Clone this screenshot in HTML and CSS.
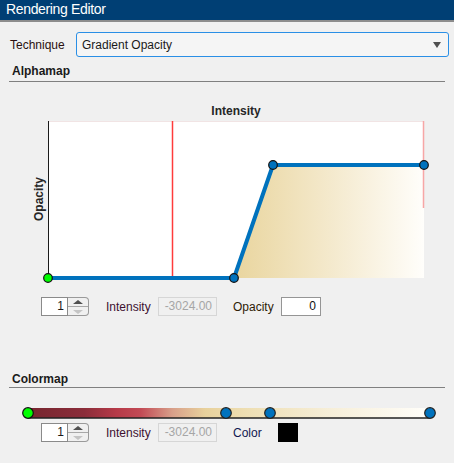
FILE: index.html
```html
<!DOCTYPE html>
<html>
<head>
<meta charset="utf-8">
<link rel="stylesheet" href="styles.css">
</head>
<body>
<div class="titlebar">Rendering Editor</div>
<div class="tech-row">
  <span class="tech-label">Technique</span>
  <div class="dropdown"><span>Gradient Opacity</span><span class="caret"></span></div>
</div>
<div class="section-head alpha-head">Alphamap</div>
<svg class="chart" width="454" height="208" viewBox="0 82 454 208">
  <defs>
    <linearGradient id="fillg" x1="0" y1="0" x2="1" y2="0">
      <stop offset="0" stop-color="#e9d59e"/>
      <stop offset="0.5" stop-color="#f4e9cc"/>
      <stop offset="1" stop-color="#fffefb"/>
    </linearGradient>
  </defs>
  <text x="236" y="115" class="ax-title" text-anchor="middle">Intensity</text>
  <text class="ax-title" text-anchor="middle" transform="translate(43 199) rotate(-90)">Opacity</text>
  <rect x="48" y="121" width="376" height="157" fill="#ffffff"/>
  <line x1="48" y1="121.5" x2="424" y2="121.5" stroke="#f1e4e4" stroke-width="1"/>
  <polygon points="234,278 273,165 424,165 424,278" fill="url(#fillg)"/>
  <line x1="172.5" y1="121" x2="172.5" y2="278" stroke="#ff3b3b" stroke-width="1.5"/>
  <line x1="423.5" y1="121" x2="423.5" y2="208" stroke="#f7a6a6" stroke-width="1.5"/>
  <line x1="48.5" y1="121" x2="48.5" y2="278" stroke="#1a1a1a" stroke-width="1"/>
  <polyline points="48,278 234,278 273,165 424,165" fill="none" stroke="#0072bd" stroke-width="4" stroke-linejoin="round"/>
  <circle cx="48" cy="278" r="4.3" fill="#00ff00" stroke="#111" stroke-width="1.2"/>
  <circle cx="234" cy="278" r="4.3" fill="#0072bd" stroke="#111" stroke-width="1.2"/>
  <circle cx="273" cy="165" r="4.3" fill="#0072bd" stroke="#111" stroke-width="1.2"/>
  <circle cx="424" cy="165" r="4.3" fill="#0072bd" stroke="#111" stroke-width="1.2"/>
</svg>
<div class="ctrl-row row1">
  <div class="spinner"><span class="spin-val">1</span><span class="spin-btns"><span class="up"></span><span class="down"></span></span></div>
  <span class="lbl lbl-int">Intensity</span>
  <span class="field disabled">-3024.00</span>
  <span class="lbl lbl-op">Opacity</span>
  <span class="field enabled">0</span>
</div>
<div class="section-head color-head">Colormap</div>
<svg class="cbar" width="454" height="22" viewBox="0 400 454 22">
  <defs>
    <linearGradient id="cmapg" x1="28" y1="0" x2="430" y2="0" gradientUnits="userSpaceOnUse">
      <stop offset="0" stop-color="#76262f"/>
      <stop offset="0.14" stop-color="#8b2d3a"/>
      <stop offset="0.22" stop-color="#b63a48"/>
      <stop offset="0.28" stop-color="#c24a55"/>
      <stop offset="0.36" stop-color="#d8a08a"/>
      <stop offset="0.44" stop-color="#e8d19c"/>
      <stop offset="0.55" stop-color="#eedfb4"/>
      <stop offset="0.75" stop-color="#f6eed8"/>
      <stop offset="1" stop-color="#fffefa"/>
    </linearGradient>
  </defs>
  <rect x="28" y="407" width="402" height="10" fill="url(#cmapg)"/>
  <line x1="28" y1="417" x2="430" y2="417" stroke="#222" stroke-width="1.5"/>
  <circle cx="28" cy="412" r="5.3" fill="#00ff00" stroke="#111" stroke-width="1.2"/>
  <circle cx="226" cy="412" r="5.3" fill="#0072bd" stroke="#222" stroke-width="1.2"/>
  <circle cx="270" cy="412" r="5.3" fill="#0072bd" stroke="#222" stroke-width="1.2"/>
  <circle cx="430" cy="412" r="5.3" fill="#0072bd" stroke="#222" stroke-width="1.2"/>
</svg>
<div class="ctrl-row row2">
  <div class="spinner"><span class="spin-val">1</span><span class="spin-btns"><span class="up"></span><span class="down"></span></span></div>
  <span class="lbl lbl-int">Intensity</span>
  <span class="field disabled">-3024.00</span>
  <span class="lbl lbl-col">Color</span>
  <span class="swatch"></span>
</div>
</body>
</html>
```

FILE: styles.css
```css
html, body {
  margin: 0;
  padding: 0;
}
body {
  width: 454px;
  height: 463px;
  background: #f0f0f0;
  font-family: "Liberation Sans", Arial, sans-serif;
  font-size: 12px;
  color: #1a1a1a;
  overflow: hidden;
}
.titlebar {
  height: 20px;
  line-height: 19px;
  background: #003f74;
  color: #ffffff;
  font-size: 14px;
  letter-spacing: -0.35px;
  padding-left: 6px;
  border-bottom: 2px solid #8c8c8c;
}
.tech-row {
  display: flex;
  align-items: center;
  margin-top: 10px;
  height: 25px;
}
.tech-label {
  width: 66px;
  padding-left: 10px;
  color: #2a1010;
}
.dropdown {
  box-sizing: border-box;
  width: 373px;
  height: 25px;
  border: 1px solid #2a8fe6;
  border-radius: 3px;
  background: #f5f5f5;
  display: flex;
  align-items: center;
  justify-content: space-between;
  padding: 0 7px 0 5px;
  font-size: 12px;
}
.caret {
  width: 0;
  height: 0;
  border-left: 4.5px solid transparent;
  border-right: 4.5px solid transparent;
  border-top: 6px solid #505050;
}
.section-head {
  font-weight: bold;
  margin-left: 9px;
  width: 436px;
  padding-left: 3px;
  box-sizing: border-box;
  border-bottom: 1px solid #808080;
}
.alpha-head {
  height: 25px;
  line-height: 28px;
}
.color-head {
  margin-top: 52px;
  height: 20px;
  line-height: 22px;
}
.chart, .cbar {
  display: block;
}
.ax-title {
  font-family: "Liberation Sans", Arial, sans-serif;
  font-size: 12px;
  font-weight: bold;
  fill: #262626;
}
.row1 {
  margin-top: 7px;
}
.cbar {
  margin-top: 13px;
}
.ctrl-row {
  display: flex;
  align-items: center;
  height: 19px;
  padding-left: 41px;
}
.spinner {
  display: flex;
  height: 19px;
}
.spin-val {
  box-sizing: border-box;
  width: 27px;
  height: 19px;
  border: 1px solid #8a8a8a;
  background: #ffffff;
  text-align: right;
  padding-right: 3px;
  line-height: 17px;
}
.spin-btns {
  box-sizing: border-box;
  width: 21px;
  height: 19px;
  border: 1px solid #9a9a9a;
  border-left: none;
  border-radius: 0 4px 4px 0;
  display: flex;
  flex-direction: column;
  background: #f0f0f0;
}
.spin-btns .up, .spin-btns .down {
  flex: 1;
  position: relative;
}
.spin-btns .up {
  border-bottom: 1px solid #a8a8a8;
}
.spin-btns .up::after {
  content: "";
  position: absolute;
  left: 5px;
  top: 2px;
  border-left: 5px solid transparent;
  border-right: 5px solid transparent;
  border-bottom: 4px solid #505050;
}
.spin-btns .down::after {
  content: "";
  position: absolute;
  left: 5px;
  top: 3px;
  border-left: 5px solid transparent;
  border-right: 5px solid transparent;
  border-top: 4px solid #c4c4c4;
}
.lbl {
  font-size: 12px;
}
.lbl-int {
  margin-left: 17px;
  width: 52px;
  color: #3e1030;
}
.lbl-op {
  margin-left: 16px;
  width: 48px;
  color: #2e2006;
}
.lbl-col {
  margin-left: 16px;
  width: 45px;
  color: #101850;
}
.field {
  box-sizing: border-box;
  height: 19px;
  line-height: 17px;
  text-align: right;
  padding-right: 4px;
}
.field.disabled {
  width: 59px;
  border: 1px solid #d6d6d6;
  background: #f0f0f0;
  color: #a6a6a6;
}
.field.enabled {
  width: 40px;
  border: 1px solid #959595;
  background: #ffffff;
  color: #111;
}
.swatch {
  width: 20px;
  height: 19px;
  background: #000000;
}
```
